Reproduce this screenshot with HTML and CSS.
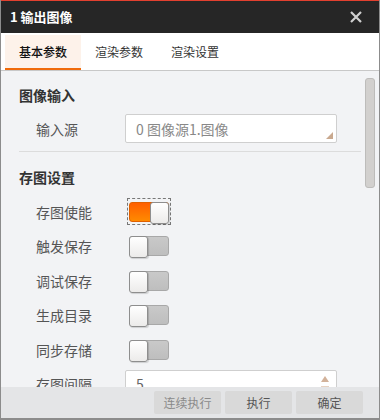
FILE: index.html
```html
<!DOCTYPE html>
<html lang="zh">
<head>
<meta charset="utf-8">
<link rel="stylesheet" href="styles.css">
</head>
<body>
<div class="window">
  <div class="titlebar">
    <span class="title">1 输出图像</span>
    <svg class="close" width="14" height="14" viewBox="0 0 14 14"><path d="M2 2L12 12M12 2L2 12" stroke="#d0d0d0" stroke-width="2.2" fill="none"/></svg>
  </div>
  <div class="tabs">
    <div class="tab active">基本参数</div>
    <div class="tab">渲染参数</div>
    <div class="tab">渲染设置</div>
  </div>
  <div class="body">
    <div class="main">
      <div class="section">图像输入</div>
      <div class="field first">
        <span class="label">输入源</span>
        <div class="input select"><span class="val">0 图像源1.图像</span><span class="corner"></span></div>
      </div>
      <div class="divider"></div>
      <div class="section second">存图设置</div>
      <div class="row">
        <span class="label">存图使能</span>
        <div class="focus"><div class="toggle on"><div class="knob"></div></div></div>
      </div>
      <div class="row">
        <span class="label">触发保存</span>
        <div class="toggle"><div class="knob"></div></div>
      </div>
      <div class="row">
        <span class="label">调试保存</span>
        <div class="toggle"><div class="knob"></div></div>
      </div>
      <div class="row">
        <span class="label">生成目录</span>
        <div class="toggle"><div class="knob"></div></div>
      </div>
      <div class="row">
        <span class="label">同步存储</span>
        <div class="toggle"><div class="knob"></div></div>
      </div>
      <div class="row">
        <span class="label">存图间隔</span>
        <div class="input num"><span class="val">5</span><span class="up"></span><span class="down"></span></div>
      </div>
    </div>
    <div class="scrolltrack"><div class="thumb"></div></div>
  </div>
  <div class="footer">
    <button class="btn dim">连续执行</button>
    <button class="btn">执行</button>
    <button class="btn">确定</button>
  </div>
</div>
</body>
</html>
```
FILE: styles.css
```css
html, body { margin: 0; padding: 0; }
body {
  width: 380px; height: 420px; overflow: hidden;
  font-family: "Noto Sans CJK SC", "Liberation Sans", sans-serif;
  font-size: 14px;
  background: #f2f3f5;
}
.window {
  width: 380px; height: 420px; box-sizing: border-box;
  display: flex; flex-direction: column;
  border-left: 1px solid #8c8c8c;
  border-right: 1px solid #8c8c8c;
  border-bottom: 2px solid #8c8c8c;
  overflow: hidden;
}
.titlebar {
  height: 33px; flex: none; box-sizing: border-box;
  margin: 0 -1px;
  background: #262626;
  border-top: 1px solid #e2402f;
  display: flex; align-items: center; justify-content: space-between;
  padding: 0 17px 0 10px;
}
.title { color: #fff; font-weight: bold; font-size: 13px; line-height: 20px; }
.close { display: block; }
.tabs {
  height: 38px; flex: none; box-sizing: border-box;
  background: #fff;
  border-bottom: 1px solid #c8c8c8;
  display: flex; align-items: stretch;
  padding: 2px 0 0 4px;
}
.tab {
  width: 76px; box-sizing: border-box;
  display: flex; align-items: center; justify-content: center;
  color: #333; font-size: 12px;
  border-bottom: 2px solid transparent;
}
.tab.active {
  background: #fdf2ea;
  border-bottom-color: #f06a0a;
  color: #111;
  font-weight: 500;
}
.body {
  flex: 1; min-height: 0;
  display: flex;
  background: #f2f3f5;
  overflow: hidden;
}
.main { flex: 1; padding-left: 18px; }
.section {
  font-weight: bold; color: #333; line-height: 20px;
  padding-top: 14px;
}
.section.second { padding-top: 15px; margin-bottom: 7.75px; }
.field { display: flex; align-items: center; height: 29px; margin-top: 9px; }
.label { width: 106px; padding-left: 17px; box-sizing: border-box; color: #555; flex: none; }
.input {
  position: relative;
  width: 212px; height: 29px; box-sizing: border-box;
  background: #fff;
  border: 1px solid #cfcfcf; border-radius: 2px;
  display: flex; align-items: center;
  padding-left: 10px;
  color: #888;
}
.input.num { align-self: flex-start; margin-top: 2.75px; color: #666; }
.corner {
  position: absolute; right: 3px; bottom: 3px;
  width: 0; height: 0;
  border-left: 7px solid transparent;
  border-bottom: 7px solid #c9a98f;
}
.up {
  position: absolute; right: 7px; top: 5px;
  width: 0; height: 0;
  border-left: 4px solid transparent;
  border-right: 4px solid transparent;
  border-bottom: 6px solid #d2b29a;
}
.down {
  position: absolute; right: 7px; top: 15px;
  width: 8px; height: 3px; background: #e6d2c2;
}
.divider {
  height: 1px; background: #dcdcdc;
  margin: 7.5px 3px 0 0;
}
.row { display: flex; align-items: center; height: 34.5px; }
.row > .toggle { margin-left: 4px; }
.focus {
  margin-left: 2px;
  width: 44px; height: 27px; box-sizing: border-box;
  border: 1px dashed #777;
  display: flex; align-items: center; justify-content: center;
}
.toggle {
  position: relative;
  width: 40px; height: 20px; box-sizing: border-box;
  border: 1px solid #a8a8a8; border-radius: 3px;
  background: linear-gradient(#c9c9c9, #bebebe);
}
.toggle .knob {
  position: absolute; left: -1px; top: -1px;
  width: 19px; height: 22px; box-sizing: border-box;
  border: 1px solid #8e8e8e; border-radius: 3px;
  background: linear-gradient(#ffffff, #ecebea);
  box-shadow: 1px 1px 1px rgba(0,0,0,0.15);
}
.toggle.on {
  background: linear-gradient(#ff5f00, #ff8a00);
  border-color: #e06000;
}
.toggle.on .knob { left: auto; right: -1px; }
.scrolltrack { width: 15px; flex: none; padding-top: 7px; }
.thumb {
  width: 10px; height: 110px; box-sizing: border-box;
  margin-left: 1px;
  background: #d2d0ce;
  border: 1px solid #bdbcba;
  border-radius: 3px;
}
.footer {
  height: 31px; flex: none; box-sizing: border-box;
  background: #e4e5e7;
  display: flex; align-items: center; justify-content: flex-end;
  gap: 4px;
  padding: 0 16px 1px 0;
}
.btn {
  width: 67px; height: 23px;
  border: none; border-radius: 2px;
  background: #d9d9d9;
  font-family: "Noto Sans CJK SC", "Liberation Sans", sans-serif;
  font-size: 12px; color: #555;
  padding: 0;
}
.btn.dim { color: #8a8a8a; }
```
